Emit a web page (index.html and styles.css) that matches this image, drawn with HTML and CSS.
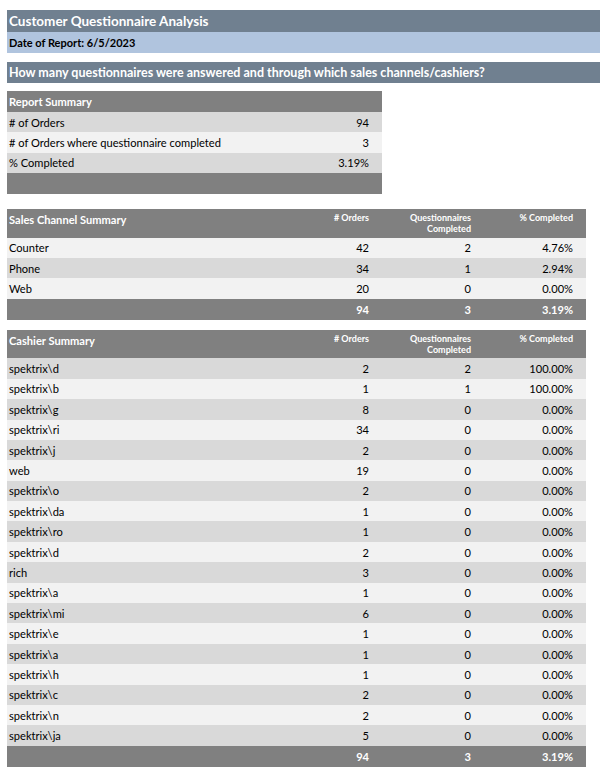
FILE: index.html
```html
<!DOCTYPE html>
<html>
<head>
<meta charset="utf-8">
<link rel="stylesheet" href="styles.css">
</head>
<body>
<div class="page">
  <div class="title">Customer Questionnaire Analysis</div>
  <div class="date">Date of Report: 6/5/2023</div>
  <div class="question">How many questionnaires were answered and through which sales channels/cashiers?</div>

  <div class="summary">
    <div class="row head"><div class="label">Report Summary</div><div class="num"></div></div>
    <div class="row dark"><div class="label"># of Orders</div><div class="num">94</div></div>
    <div class="row light"><div class="label"># of Orders where questionnaire completed</div><div class="num">3</div></div>
    <div class="row dark"><div class="label">% Completed</div><div class="num">3.19%</div></div>
    <div class="row foot"><div class="label"></div><div class="num"></div></div>
  </div>

  <div class="table sales">
    <div class="row head"><div class="label">Sales Channel Summary</div><div class="ch"># Orders</div><div class="ch">Questionnaires<br>Completed</div><div class="ch">% Completed</div></div>
    <div class="row light"><div class="label">Counter</div><div class="num">42</div><div class="num">2</div><div class="num">4.76%</div></div>
    <div class="row dark"><div class="label">Phone</div><div class="num">34</div><div class="num">1</div><div class="num">2.94%</div></div>
    <div class="row light"><div class="label">Web</div><div class="num">20</div><div class="num">0</div><div class="num">0.00%</div></div>
    <div class="row foot"><div class="label"></div><div class="num">94</div><div class="num">3</div><div class="num">3.19%</div></div>
  </div>

  <div class="table cashier">
    <div class="row head"><div class="label">Cashier Summary</div><div class="ch"># Orders</div><div class="ch">Questionnaires<br>Completed</div><div class="ch">% Completed</div></div>
    <div class="row dark"><div class="label">spektrix\d</div><div class="num">2</div><div class="num">2</div><div class="num">100.00%</div></div>
    <div class="row light"><div class="label">spektrix\b</div><div class="num">1</div><div class="num">1</div><div class="num">100.00%</div></div>
    <div class="row dark"><div class="label">spektrix\g</div><div class="num">8</div><div class="num">0</div><div class="num">0.00%</div></div>
    <div class="row light"><div class="label">spektrix\ri</div><div class="num">34</div><div class="num">0</div><div class="num">0.00%</div></div>
    <div class="row dark"><div class="label">spektrix\j</div><div class="num">2</div><div class="num">0</div><div class="num">0.00%</div></div>
    <div class="row light"><div class="label">web</div><div class="num">19</div><div class="num">0</div><div class="num">0.00%</div></div>
    <div class="row dark"><div class="label">spektrix\o</div><div class="num">2</div><div class="num">0</div><div class="num">0.00%</div></div>
    <div class="row light"><div class="label">spektrix\da</div><div class="num">1</div><div class="num">0</div><div class="num">0.00%</div></div>
    <div class="row dark"><div class="label">spektrix\ro</div><div class="num">1</div><div class="num">0</div><div class="num">0.00%</div></div>
    <div class="row light"><div class="label">spektrix\d</div><div class="num">2</div><div class="num">0</div><div class="num">0.00%</div></div>
    <div class="row dark"><div class="label">rich</div><div class="num">3</div><div class="num">0</div><div class="num">0.00%</div></div>
    <div class="row light"><div class="label">spektrix\a</div><div class="num">1</div><div class="num">0</div><div class="num">0.00%</div></div>
    <div class="row dark"><div class="label">spektrix\mi</div><div class="num">6</div><div class="num">0</div><div class="num">0.00%</div></div>
    <div class="row light"><div class="label">spektrix\e</div><div class="num">1</div><div class="num">0</div><div class="num">0.00%</div></div>
    <div class="row dark"><div class="label">spektrix\a</div><div class="num">1</div><div class="num">0</div><div class="num">0.00%</div></div>
    <div class="row light"><div class="label">spektrix\h</div><div class="num">1</div><div class="num">0</div><div class="num">0.00%</div></div>
    <div class="row dark"><div class="label">spektrix\c</div><div class="num">2</div><div class="num">0</div><div class="num">0.00%</div></div>
    <div class="row light"><div class="label">spektrix\n</div><div class="num">2</div><div class="num">0</div><div class="num">0.00%</div></div>
    <div class="row dark"><div class="label">spektrix\ja</div><div class="num">5</div><div class="num">0</div><div class="num">0.00%</div></div>
    <div class="row foot"><div class="label"></div><div class="num">94</div><div class="num">3</div><div class="num">3.19%</div></div>
  </div>
</div>
</body>
</html>
```

FILE: styles.css
```css
* { box-sizing: border-box; }
html, body { margin: 0; padding: 0; background: #ffffff; }
body {
  font-family: "Lato", "Open Sans", sans-serif;
  font-size: 11.1px;
  color: #000;
}
.page {
  padding: 10px 0 0 7px;
  display: flex;
  flex-direction: column;
}
.title {
  background: #708090;
  color: #fff;
  font-weight: 700;
  font-size: 13.5px;
  height: 22px;
  line-height: 22px;
  padding-left: 2px;
}
.date {
  background: #b0c4de;
  font-weight: 700;
  font-size: 11px;
  height: 21px;
  line-height: 21px;
  padding-left: 2px;
}
.question {
  margin-top: 9px;
  background: #708090;
  color: #fff;
  font-weight: 700;
  font-size: 12.5px;
  height: 21px;
  line-height: 21px;
  padding-left: 2px;
}
.summary {
  margin-top: 8px;
  width: 375px;
}
.table {
  width: 579px;
}
.sales { margin-top: 15px; }
.cashier { margin-top: 10px; }

.row {
  display: grid;
  height: 20.4px;
  align-items: center;
}
.summary .row { grid-template-columns: 273px 102px; }
.table .row { grid-template-columns: 273px 102px 102px 102px; }

.label { padding-left: 2px; white-space: nowrap; }
.num { text-align: right; padding-right: 13px; }

.dark { background: #d9d9d9; }
.light { background: #f2f2f2; }
.head, .foot { background: #808080; color: #fff; font-weight: 700; }
.summary .head { height: 21px; }
.table .head {
  height: 28.5px;
  align-items: start;
}
.table .head .label { padding-top: 4px; }
.ch {
  text-align: right;
  padding-right: 13px;
  font-size: 9px;
  line-height: 11px;
  padding-top: 3px;
}
.foot { height: 21px; }
```
